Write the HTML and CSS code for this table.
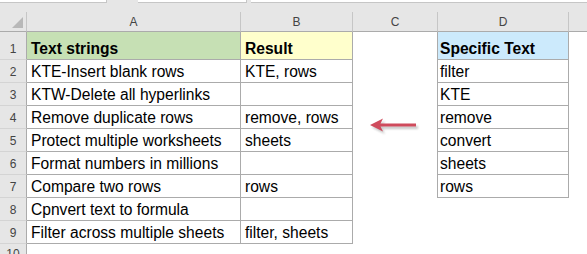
FILE: index.html
```html
<!DOCTYPE html>
<html>
<head>
<meta charset="utf-8">
<link rel="stylesheet" href="styles.css">
</head>
<body>
<div class="sheet">
  <div class="strip">
    <div class="box box1"></div>
    <div class="box box2"></div>
    <div class="box box3"></div>
  </div>

  <div class="ch corner"><span class="tri"></span></div>
  <div class="ch sep">A</div>
  <div class="ch sep">B</div>
  <div class="ch">C</div>
  <div class="ch sepd">D</div>
  <div class="ch"></div>

  <div class="rh">1</div>
  <div class="c t green b">Text strings</div>
  <div class="c t yellow b">Result</div>
  <div class="c"></div>
  <div class="c t d blue b">Specific Text</div>
  <div class="c"></div>

  <div class="rh">2</div>
  <div class="c t">KTE-Insert blank rows</div>
  <div class="c t">KTE, rows</div>
  <div class="c"></div>
  <div class="c t d">filter</div>
  <div class="c"></div>

  <div class="rh">3</div>
  <div class="c t">KTW-Delete all hyperlinks</div>
  <div class="c t"></div>
  <div class="c"></div>
  <div class="c t d">KTE</div>
  <div class="c"></div>

  <div class="rh">4</div>
  <div class="c t">Remove duplicate rows</div>
  <div class="c t">remove, rows</div>
  <div class="c"></div>
  <div class="c t d">remove</div>
  <div class="c"></div>

  <div class="rh">5</div>
  <div class="c t">Protect multiple worksheets</div>
  <div class="c t">sheets</div>
  <div class="c"></div>
  <div class="c t d">convert</div>
  <div class="c"></div>

  <div class="rh">6</div>
  <div class="c t">Format numbers in millions</div>
  <div class="c t"></div>
  <div class="c"></div>
  <div class="c t d">sheets</div>
  <div class="c"></div>

  <div class="rh">7</div>
  <div class="c t">Compare two rows</div>
  <div class="c t">rows</div>
  <div class="c"></div>
  <div class="c t d">rows</div>
  <div class="c"></div>

  <div class="rh">8</div>
  <div class="c t">Cpnvert text to formula</div>
  <div class="c t"></div>
  <div class="c"></div>
  <div class="c"></div>
  <div class="c"></div>

  <div class="rh">9</div>
  <div class="c t">Filter across multiple sheets</div>
  <div class="c t">filter, sheets</div>
  <div class="c"></div>
  <div class="c"></div>
  <div class="c"></div>

  <div class="rh last">10</div>
  <div class="c span5"></div>

  <svg class="arrow" width="60" height="24" viewBox="0 0 60 24">
    <defs>
      <filter id="sh" x="-20%" y="-50%" width="140%" height="200%">
        <feGaussianBlur stdDeviation="1.2"/>
      </filter>
    </defs>
    <g transform="translate(2,2.5)" fill="#9a9a9a" opacity="0.55" filter="url(#sh)">
      <path d="M4 11 L17 4.5 L14.5 9.5 L50 9.5 L50 12.5 L14.5 12.5 L17 17.5 Z"/>
    </g>
    <path d="M4 11 L17 4.5 L14.5 9.5 L50 9.5 L50 12.5 L14.5 12.5 L17 17.5 Z" fill="#cf4b5c"/>
  </svg>
</div>
</body>
</html>
```

FILE: styles.css
```css
html, body {
  margin: 0;
  padding: 0;
  background: #ffffff;
}

.sheet {
  position: relative;
  width: 587px;
  height: 254px;
  overflow: hidden;
  display: grid;
  grid-template-columns: 27px 214px 112px 84px 132px 1fr;
  grid-template-rows: 12px 20px 28px repeat(8, 23px) 1fr;
  font-family: "Liberation Sans", Arial, sans-serif;
  font-size: 15.6px;
  color: #000;
  box-sizing: border-box;
}

.strip {
  grid-column: 1 / -1;
  background: #e6e6e6;
  display: flex;
  align-items: flex-start;
}

.box {
  height: 2px;
  background: #ffffff;
  border-bottom: 1px solid #c6c6c6;
  border-right: 1px solid #c6c6c6;
  box-sizing: content-box;
}
.box1 { width: 106px; margin-right: 31px; }
.box2 { width: 108px; margin-right: 4px; }
.box3 { flex: 1; border-right: none; }

.ch {
  background: #e6e6e6;
  border-bottom: 1px solid #ababab;
  color: #444;
  font-size: 12px;
  display: flex;
  align-items: center;
  justify-content: center;
  box-sizing: border-box;
  padding-top: 1px;
}
.ch.sep { border-right: 1px solid #c6c6c6; }
.ch.sepd {
  border-left: 1px solid #c6c6c6;
  border-right: 1px solid #c6c6c6;
}
.ch.corner {
  border-right: 1px solid #c6c6c6;
  position: relative;
}
.tri {
  position: absolute;
  right: 3px;
  bottom: 3px;
  width: 0;
  height: 0;
  border-left: 11px solid transparent;
  border-bottom: 11px solid #b8b8b8;
}

.rh {
  background: #e6e6e6;
  border-right: 1px solid #ababab;
  border-bottom: 1px solid #d4d4d4;
  color: #444;
  font-size: 12px;
  display: flex;
  align-items: flex-end;
  justify-content: center;
  padding-bottom: 3px;
  box-sizing: border-box;
}
.rh.last {
  border-bottom: none;
  align-items: flex-start;
  padding-top: 3px;
}

.c {
  box-sizing: border-box;
  white-space: nowrap;
  overflow: hidden;
  display: flex;
  align-items: flex-end;
  padding: 0 0 2px 4px;
  line-height: 17px;
}

.t {
  border-right: 1px solid #ababab;
  border-bottom: 1px solid #ababab;
}
.d { border-left: 1px solid #ababab; padding-left: 2px; }

.span5 { grid-column: 2 / -1; }

.b { font-weight: bold; }
.green { background: #c6e0b4; }
.yellow { background: #ffffcc; }
.blue { background: #cceafc; }

.arrow {
  position: absolute;
  left: 366px;
  top: 114px;
}
```
